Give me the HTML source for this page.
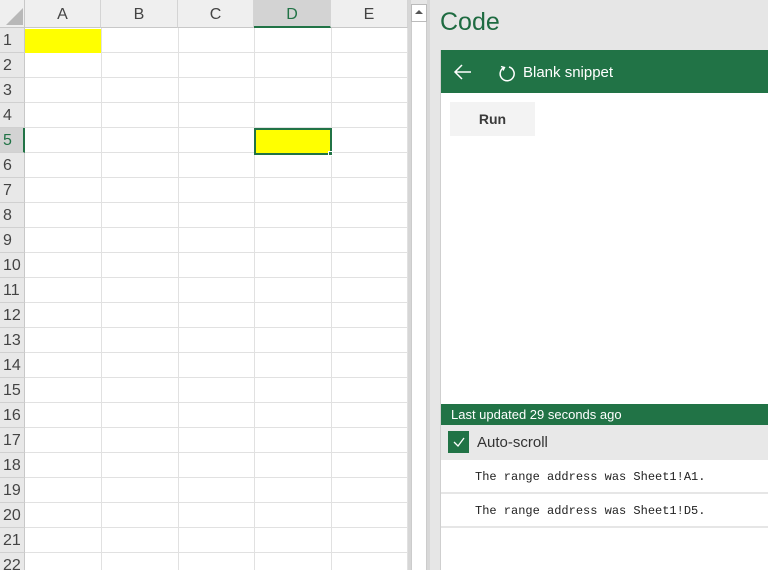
<!DOCTYPE html>
<html style="width:768px;height:570px;overflow:hidden"><head><style>
*{margin:0;padding:0;box-sizing:border-box}
body{width:768px;height:570px;overflow:hidden;background:#e6e6e6;position:relative;font-family:"Liberation Sans",sans-serif}
.abs{position:absolute}
.ch{position:absolute;top:0;height:28px;background:#efefef;border-right:1px solid #d4d4d4;border-bottom:1px solid #c8c8c8;text-align:center;line-height:30px;font-size:16px;color:#444}
.rh{position:absolute;left:0;width:25px;height:25px;background:#e8e8e8;border-bottom:1px solid #d0d0d0;border-right:1px solid #c8c8c8;font-size:16px;line-height:26px;padding-left:3px;color:#444}
.hl{position:absolute;left:25px;width:383px;height:1px;background:#e1e1e1}
.vl{position:absolute;top:28px;width:1px;height:542px;background:#e1e1e1}
.log{position:absolute;left:441px;width:327px;height:34px;border-bottom:2px solid #e6e6e6;font-family:"Liberation Mono","Noto Sans CJK JP",monospace;font-size:12px;line-height:34px;padding-left:34px;color:#222;background:#fff}
</style></head><body>
<div class="abs" style="left:0;top:28px;width:408px;height:542px;background:#fff"></div>
<div class="abs" style="left:0;top:0;width:25px;height:28px;background:#efefef;border-right:1px solid #c8c8c8;border-bottom:1px solid #c8c8c8"></div>
<svg class="abs" style="left:4px;top:6px" width="20" height="20"><polygon points="19,2 19,19 2,19" fill="#b8b8b8"/></svg>
<div class="ch" style="left:25px;width:76px">A</div>
<div class="ch" style="left:101px;width:77px">B</div>
<div class="ch" style="left:178px;width:76px">C</div>
<div class="ch" style="left:254px;width:77px;background:#d3d3d3;border-bottom:2px solid #217346;color:#217346">D</div>
<div class="ch" style="left:331px;width:77px">E</div>
<div id="rows"></div>
<div class="vl" style="left:101px"></div><div class="vl" style="left:178px"></div><div class="vl" style="left:254px"></div><div class="vl" style="left:331px"></div><div class="vl" style="left:407px"></div>
<div class="abs" style="left:25px;top:29px;width:76px;height:24px;background:#ff0"></div>
<div class="abs" style="left:254px;top:128px;width:78px;height:27px;background:#ff0;border:2px solid #217346"></div>
<div class="abs" style="left:328px;top:151px;width:5px;height:5px;background:#217346;border:1px solid #fff"></div>
<div class="abs" style="left:408px;top:0;width:3px;height:570px;background:#d6d6d6"></div>
<div class="abs" style="left:411px;top:4px;width:16px;height:566px;background:#fff;border-left:1px solid #ccc;border-right:1px solid #ccc"></div>
<div class="abs" style="left:411px;top:4px;width:16px;height:18px;border:1px solid #bbb;background:#fff"></div>
<svg class="abs" style="left:414px;top:9px" width="10" height="6"><polygon points="1,5 5,1 9,5" fill="#555"/></svg>
<div class="abs" style="left:427px;top:0;width:3px;height:570px;background:#d8d8d8"></div>
<div class="abs" style="left:440px;top:50px;width:1px;height:520px;background:#cfcfcf"></div>
<div class="abs" style="left:440px;top:8px;font-size:25px;color:#1e6b41">Code</div>
<div class="abs" style="left:441px;top:50px;width:327px;height:43px;background:#217346"></div>
<svg class="abs" style="left:452px;top:63px" width="20" height="18"><path d="M19 9H3M10 2L3 9L10 16" stroke="#fff" stroke-width="1.5" fill="none"/></svg>
<svg class="abs" style="left:498px;top:64px" width="18" height="18"><path d="M6 3.5A7 7 0 1 0 11 3" stroke="#fff" stroke-width="1.5" fill="none"/><path d="M3 2.5L6.5 3.5L5 6.5" stroke="#fff" stroke-width="1.4" fill="none"/></svg>
<div class="abs" style="left:523px;top:64px;font-size:15px;color:#fff">Blank snippet</div>
<div class="abs" style="left:441px;top:93px;width:327px;height:311px;background:#fff"></div>
<div class="abs" style="left:450px;top:102px;width:85px;height:34px;background:#f3f3f3;text-align:center;line-height:34px;font-size:14px;font-weight:bold;color:#3a3a3a">Run</div>
<div class="abs" style="left:441px;top:404px;width:327px;height:21px;background:#217346;color:#fff;font-size:13px;line-height:22px;padding-left:10px">Last updated 29 seconds ago</div>
<div class="abs" style="left:441px;top:425px;width:327px;height:35px;background:#e8e8e8"></div>
<div class="abs" style="left:448px;top:431px;width:21px;height:22px;background:#217346"></div>
<svg class="abs" style="left:452px;top:436px" width="14" height="12"><path d="M2 6L6 10L12 2" stroke="#fff" stroke-width="1.3" fill="none"/></svg>
<div class="abs" style="left:477px;top:434px;font-size:15px;color:#333">Auto-scroll</div>
<div class="log" style="top:460px">The range address was Sheet1!A1.</div>
<div class="log" style="top:494px">The range address was Sheet1!D5.</div>
<div class="abs" style="left:441px;top:528px;width:327px;height:42px;background:#fff"></div>
<script>
var h='';for(var i=1;i<=22;i++){var t=28+25*(i-1);h+='<div class="rh" style="top:'+t+'px'+(i==5?';background:#d3d3d3;border-right:2px solid #217346;color:#217346':'')+'">'+i+'</div><div class="hl" style="top:'+(t+24)+'px"></div>';}
document.getElementById('rows').innerHTML=h;
</script>
</body></html>
